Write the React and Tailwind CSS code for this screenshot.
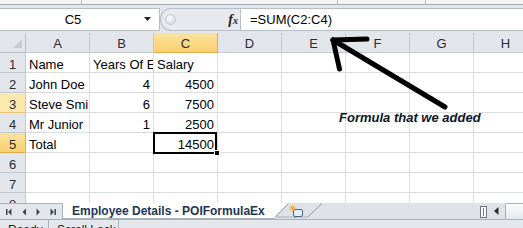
import React from 'react';

const COLS = ['A', 'B', 'C', 'D', 'E', 'F', 'G', 'H'];
const ROWS = [1, 2, 3, 4, 5, 6, 7, 8];
const DATA = {
  1: ['Name', 'Years Of E', 'Salary'],
  2: ['John Doe', '4', '4500'],
  3: ['Steve Smi', '6', '7500'],
  4: ['Mr Junior', '1', '2500'],
  5: ['Total', '', '14500'],
};
const ROW_BG = {
  3: 'bg-[#fde9ae] border-[#e9c777]',
  5: 'bg-[linear-gradient(#fbe39f,#f8d070)] border-[#e0ad4a]',
};

function Cell({ row, col }) {
  const vals = DATA[row] || [];
  const v = vals[col] ?? '';
  const numeric = row > 1 && col > 0 && v !== '';
  const selected = row === 5 && col === 2;
  return (
    <div className="relative w-[64px] h-[20px] shrink-0 border-r border-b border-[#dadcde]">
      <div
        className={
          'h-[19px] overflow-hidden whitespace-nowrap text-[13px] leading-[19px] pt-[2px] text-black ' +
          (numeric ? 'text-right pr-[3px]' : 'text-left pl-[3px]')
        }
      >
        {v}
      </div>
      {selected && (
        <>
          <div className="absolute left-[-1px] top-[-1px] w-[64px] h-[22px] border-2 border-black z-10" />
          <div className="absolute left-[60px] top-[17px] w-[6px] h-[6px] bg-black border border-white z-20" />
        </>
      )}
    </div>
  );
}

function NavIcons() {
  return (
    <svg width="63" height="16" viewBox="0 0 63 16">
      <rect x="6" y="5" width="1.5" height="6" fill="#3c4654" />
      <polygon points="11.5,4.5 11.5,11.5 8,8" fill="#3c4654" />
      <polygon points="26,4.5 26,11.5 22.5,8" fill="#3c4654" />
      <polygon points="36.5,4.5 36.5,11.5 40,8" fill="#3c4654" />
      <polygon points="50.5,4.5 50.5,11.5 54,8" fill="#3c4654" />
      <rect x="54.5" y="5" width="1.5" height="6" fill="#3c4654" />
    </svg>
  );
}

function TabEdge() {
  return (
    <svg width="50" height="16" viewBox="0 0 50 16" className="shrink-0">
      <polygon points="0,0 13,0 0,14" fill="#ffffff" />
      <line x1="0.5" y1="13.8" x2="13.5" y2="0.5" stroke="#8e98a5" strokeWidth="1" />
      <line x1="0" y1="14" x2="33" y2="14" stroke="#a8b0ba" strokeWidth="1" />
      <line x1="33" y1="13.8" x2="47" y2="0.5" stroke="#8e98a5" strokeWidth="1" />
      <rect x="18.5" y="6.5" width="9" height="7" rx="1.5" fill="#e4ecf5" stroke="#52657f" strokeWidth="1" />
      <path d="M20 13.5 L19 15 L22 13.5" fill="#52657f" />
      <circle cx="17.5" cy="5" r="2" fill="#f5a623" />
      <path d="M17.5 1.5 V8.5 M14 5 H21 M15 2.5 L20 7.5 M20 2.5 L15 7.5" stroke="#f5b342" strokeWidth="0.8" />
    </svg>
  );
}

export default function App() {
  return (
    <div className="relative w-[523px] h-[228px] overflow-hidden bg-white font-['Liberation_Sans',Arial,sans-serif]">
      {/* top strip */}
      <div className="flex h-[5px] bg-[#f1f3f5] border-b border-[#a5adb7]">
        <div className="w-[82px] border-r border-[#b5bcc5]" />
        <div className="w-[256px] border-r border-[#b5bcc5]" />
        <div className="w-[88px] border-r border-[#b5bcc5]" />
        <div className="flex-1" />
      </div>

      {/* formula bar */}
      <div className="h-[28px] bg-[#e2e6eb] pt-[3px]">
        <div className="flex h-[23px]">
          <div className="flex w-[160px] items-center bg-white border-y border-r border-[#b7bec7]">
            <div className="flex-1 text-center text-[13px] leading-[21px] pl-[2px] text-black">C5</div>
            <svg width="8" height="5" viewBox="0 0 8 5" className="mr-[7px]">
              <polygon points="0,0 7,0 3.5,4" fill="#222" />
            </svg>
          </div>
          <div className="relative flex w-[80px] items-center justify-end rounded-l-full border-y border-l border-[#b7bec7] bg-[#e6e9ed] pr-[2px]">
            <div className="absolute left-[4px] top-[5px] w-[11px] h-[11px] rounded-full bg-[radial-gradient(circle_at_40%_35%,#ffffff,#c9cfd6)] border border-[#c3c9d1]" />
            <span className="font-['Liberation_Serif',serif] italic font-bold text-[14px] leading-none text-[#222]">
              f<span className="text-[10px]">x</span>
            </span>
          </div>
          <div className="flex-1 bg-white border-y border-l border-[#b7bec7] pl-[9px] text-[13px] leading-[21px] text-black">
            =SUM(C2:C4)
          </div>
        </div>
      </div>

      {/* column header */}
      <div className="flex h-[20px]">
        <div className="relative w-[26px] shrink-0 bg-[#e2e6eb] border-r border-b border-[#b9c0c8]">
          <svg width="26" height="20" viewBox="0 0 26 20" className="absolute left-0 top-0">
            <polygon points="22,6 22,15 13,15" fill="#c5cbd3" />
          </svg>
        </div>
        {COLS.map((c) => (
          <div
            key={c}
            className={
              'w-[64px] h-[20px] shrink-0 border-r border-b text-center text-[13px] leading-[19px] pt-[1px] text-[#2b2b2b] ' +
              (c === 'C'
                ? 'bg-[linear-gradient(#fbe39f,#f8d070)] border-[#e0ad4a]'
                : 'bg-[#e2e6eb] border-[#c3c9d0]')
            }
          >
            {c}
          </div>
        ))}
      </div>

      {/* grid */}
      <div className="h-[150px] overflow-hidden bg-white">
        {ROWS.map((r) => (
          <div key={r} className="flex h-[20px]">
            <div
              className={
                'w-[26px] h-[20px] shrink-0 border-r border-b text-center text-[13px] leading-[19px] pt-[2px] text-[#2b2b2b] ' +
                (ROW_BG[r] || 'bg-[#e2e6eb] border-[#c3c9d0]')
              }
            >
              {r}
            </div>
            {COLS.map((c, i) => (
              <Cell key={c} row={r} col={i} />
            ))}
          </div>
        ))}
      </div>

      {/* sheet tabs bar */}
      <div className="flex h-[16px] bg-[#dfe3e8]">
        <div className="w-[63px] shrink-0 border-t border-r border-[#a9b1bb] bg-[#e3e7ec]">
          <NavIcons />
        </div>
        <div className="w-[212px] shrink-0 bg-white pl-[9px] text-[12px] font-bold leading-[16px] text-[#1c3557] whitespace-nowrap overflow-hidden border-b border-[#a8b0ba]">
          Employee Details - POIFormulaEx
        </div>
        <TabEdge />
        <div className="flex-1" />
        <div className="mt-[3px] h-[12px] w-[7px] shrink-0 border border-[#6b7480] bg-white flex items-center justify-center">
          <div className="h-[8px] w-[1px] bg-[#6b7480]" />
        </div>
        <div className="flex w-[18px] shrink-0 items-center justify-center">
          <svg width="5" height="8" viewBox="0 0 5 8">
            <polygon points="4.5,0 4.5,8 0,4" fill="#2c2c2c" />
          </svg>
        </div>
        <div className="w-[18px] shrink-0 rounded-tl-[2px] border-t border-l border-[#a9b1bb] bg-[linear-gradient(#fbfcfd,#e4e8ed)]" />
      </div>

      {/* status bar */}
      <div className="flex h-[9px] overflow-hidden border-t border-[#a9b1bb] bg-[#e4e8ec] text-[12px] leading-[12px] text-[#222]">
        <div className="w-[49px] shrink-0 border-r border-[#a9b1bb] pl-[8px] pt-[4px]">Ready</div>
        <div className="w-[70px] shrink-0 border-r border-[#a9b1bb] pl-[8px] pt-[4px]">Scroll Lock</div>
      </div>

      {/* annotation overlay */}
      <svg
        width="523"
        height="228"
        viewBox="0 0 523 228"
        className="pointer-events-none absolute left-0 top-0"
      >
        <g stroke="#000" strokeWidth="5" strokeLinecap="round" strokeLinejoin="round" fill="none">
          <line x1="333" y1="40" x2="445" y2="107" />
          <line x1="333" y1="40" x2="367" y2="39" />
          <line x1="333" y1="40" x2="339.5" y2="69" />
        </g>
      </svg>
      <div className="pointer-events-none absolute left-[339px] top-[111px] text-[13px] leading-none font-bold italic text-[#0b1526] whitespace-nowrap">
        Formula that we added
      </div>
    </div>
  );
}
